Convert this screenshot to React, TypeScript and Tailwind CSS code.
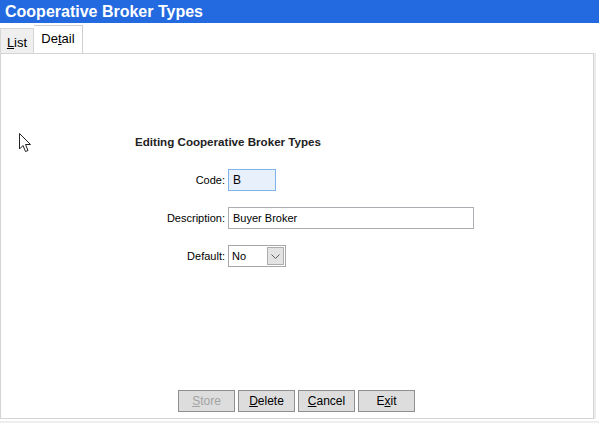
const font = { fontFamily: '"Liberation Sans", Arial, sans-serif' };

function Btn({ u, rest, pre = "", disabled = false }: { u: string; rest: string; pre?: string; disabled?: boolean }) {
  return (
    <button
      className={`h-[22px] w-[57px] border border-[#8f8f8f] bg-[#dddddd] text-[12px] leading-none ${disabled ? "text-[#a3a3a3]" : "text-black"}`}
    >
      {pre}
      <span className="underline">{u}</span>
      {rest}
    </button>
  );
}

export default function App() {
  return (
    <div style={font} className="relative h-[423px] w-[599px] overflow-hidden bg-white text-black">
      <div className="flex h-[23px] items-center bg-[#2369e0] pl-[5px] text-[16px] font-bold text-white">
        Cooperative Broker Types
      </div>
      <div className="mt-[2px] flex h-[28px] items-end">
        <div className="flex h-[25px] w-[34px] items-center justify-center border border-b-0 border-[#d6d6d6] bg-[#efefef] pt-[3px] text-[13px]">
          <span className="underline">L</span>ist
        </div>
        <div className="flex h-[28px] w-[49px] items-center justify-center border border-b-0 border-l-0 border-[#cfcfcf] bg-white pb-[1px] text-[13px]">
          De<span className="underline">t</span>ail
        </div>
      </div>
      <div className="flex">
        <div className="flex h-[366px] w-[594px] flex-col border border-[#d4d4d4] pt-[81px] pb-[6px] shadow-[2px_0_0_#ececec]">
          <div className="pl-[134px] text-[11.6px] leading-[14px] font-bold text-[#222]">Editing Cooperative Broker Types</div>
          <div className="mt-[20px] grid grid-cols-[224px_1fr] items-center gap-x-[3px] gap-y-[16px] text-[11px]">
            <div className="text-right">Code:</div>
            <div className="flex h-[22px] w-[48px] items-center border border-[#7eb4ea] bg-[#e8f1fb] pl-[4px] text-[12px]">B</div>
            <div className="text-right">Description:</div>
            <div className="flex h-[22px] w-[246px] items-center border border-[#abadb3] bg-white pl-[4px]">Buyer Broker</div>
            <div className="text-right">Default:</div>
            <div className="flex h-[22px] w-[58px] items-center justify-between border border-[#a6a6a6] bg-white pr-[1px] pl-[3px]">
              <span>No</span>
              <span className="flex h-[18px] w-[17px] items-center justify-center border border-[#acacac] bg-[#e3e3e3]">
                <svg width="9" height="5" viewBox="0 0 9 5">
                  <path d="M0.5 0.5 L4.5 4.5 L8.5 0.5" fill="none" stroke="#606060" strokeWidth="1" />
                </svg>
              </span>
            </div>
          </div>
          <div className="mt-auto flex gap-[3px] pl-[177px]">
            <Btn u="S" rest="tore" disabled />
            <Btn u="D" rest="elete" />
            <Btn u="C" rest="ancel" />
            <Btn pre="E" u="x" rest="it" />
          </div>
        </div>
      </div>
      <div className="mt-[2px] h-[2px] w-full bg-[#eeeeee]" />
      <svg className="absolute top-[133px] left-[19px]" width="13" height="20" viewBox="0 0 13 20">
        <path d="M0.5 0.5 L0.5 16 L4 12.5 L6.5 18.5 L9 17.5 L6.5 11.5 L11.5 11.5 Z" fill="white" stroke="#222" strokeWidth="1" strokeLinejoin="miter" />
      </svg>
    </div>
  );
}
